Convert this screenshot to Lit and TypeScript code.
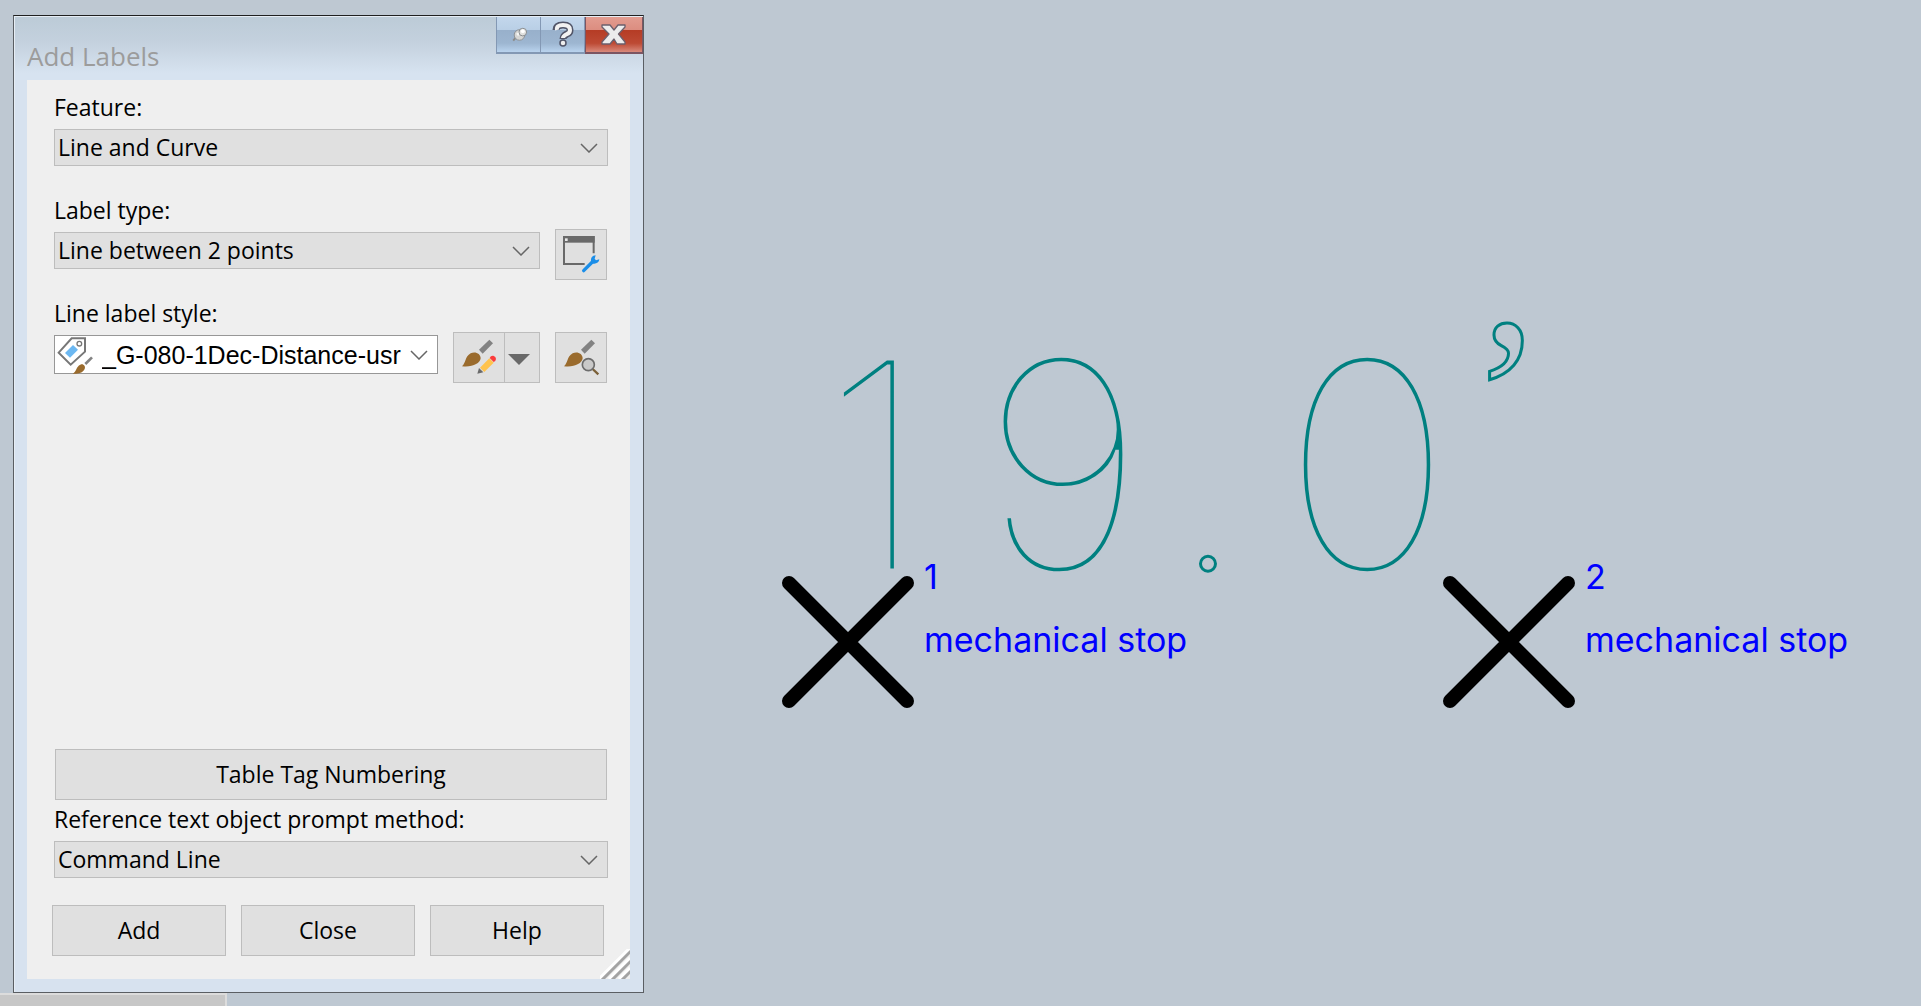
import { LitElement, html, css, svg } from "lit";
import { customElement, property } from "lit/decorators.js";

const chevron = html`<svg class="chevron" viewBox="0 0 18 10" aria-hidden="true">
  <path d="M1 1 L9 9 L17 1" fill="none" stroke="#666" stroke-width="1.5" />
</svg>`;

const brush = svg`
  <path d="M96 470 C108 460 104 442 122 431 C136 424 152 432 152 446 C150 462 126 474 96 470 Z" fill="#9a6b2d" />
  <path d="M138 424 Q154 430 157 444" fill="none" stroke="#e0e0e0" stroke-width="3" />
  <path d="M147 420 L178 390 L189 401 L158 432 Z" fill="#828282" />`;

@customElement("label-dialog")
export class LabelDialog extends LitElement {
  @property() heading = "Add Labels";
  @property() labelStyle = "_G-080-1Dec-Distance-usr";

  static styles = css`
    :host {
      display: flex;
      flex-direction: column;
      box-sizing: border-box;
      border: 1px solid #5a5e63;
      border-top-color: #202020;
      background: #d7e2ef;
      box-shadow: inset 1px 1px 0 #e6edf4;
      font: 23px/30px "Open Sans", "Noto Sans", sans-serif;
      color: #000;
    }
    .titlebar {
      display: flex;
      justify-content: space-between;
      height: 63px;
      margin: 1px 0 0 1px;
      background: linear-gradient(#bccbd7, #c4d1de 40%, #d7e3f0 90%);
    }
    .title {
      margin: 0;
      padding: 24px 0 0 12px;
      font: inherit;
      font-size: 26px;
      color: #9c9c9c;
    }
    .caption {
      display: flex;
      align-items: flex-start;
    }
    .cap {
      box-sizing: border-box;
      width: 44px;
      height: 37px;
      padding: 0;
      border: 1px solid #8398b4;
      border-width: 0 1px 2px 0;
      background: linear-gradient(#c3d7ec, #b9cfe6 37%, #98b0cb 38%, #9db6d1 75%, #b9d3ee);
    }
    .cap:first-child {
      width: 45px;
      border-left-width: 1px;
    }
    .cap.close {
      width: 58px;
      border-color: #7b5562;
      border-left: 1px solid #7b5562;
      background: linear-gradient(#e29c90, #dc8d80 37%, #b53c25 38%, #bd4a34 75%, #d98a7c);
    }
    .cap svg {
      display: block;
      width: 100%;
      height: 100%;
    }
    .client {
      position: relative;
      flex: 1;
      display: flex;
      flex-direction: column;
      margin: 0 13px 13px;
      padding: 12px 22px 23px 25px;
      background: #efefef;
    }
    .fields {
      display: flex;
      flex-direction: column;
      gap: 18px;
      padding-left: 2px;
    }
    .fields.lower {
      margin-top: auto;
    }
    .field {
      display: flex;
      flex-direction: column;
      gap: 4px;
    }
    .row {
      display: flex;
      align-items: flex-start;
      min-height: 51px;
      gap: 15px;
      padding-right: 1px;
    }
    .row.full {
      padding-right: 0;
    }
    .combo {
      flex: 1;
      display: grid;
      align-items: center;
      margin-top: 3px;
    }
    .combo > * {
      grid-area: 1 / 1;
    }
    select {
      appearance: none;
      box-sizing: border-box;
      width: 100%;
      min-width: 0;
      height: 37px;
      margin: 0;
      padding: 0 28px 1px 3px;
      border: 1px solid #bdbdbd;
      border-radius: 0;
      background: #e0e0e0;
      font: inherit;
      color: inherit;
    }
    .tagged select {
      height: 39px;
      padding: 0 28px 0 47px;
      border-color: #979797;
      background: #fff;
      font: 25px/30px "Liberation Sans", Arial, sans-serif;
    }
    .tag {
      width: 38px;
      height: 38px;
      margin-left: 2px;
      pointer-events: none;
    }
    .chevron {
      justify-self: end;
      width: 18px;
      height: 10px;
      margin-right: 10px;
      pointer-events: none;
    }
    .push {
      box-sizing: border-box;
      height: 51px;
      margin: 0;
      padding: 0 0 2px;
      border: 1px solid #bdbdbd;
      border-radius: 0;
      background: #e0e0e0;
      font: inherit;
      color: inherit;
    }
    .tool {
      width: 52px;
      padding: 0;
    }
    .push svg {
      display: block;
      width: 100%;
      height: 100%;
    }
    .split {
      display: flex;
    }
    .split .drop {
      width: 35px;
      padding: 0;
      border-left: 0;
    }
    .numbering {
      gap: 0;
    }
    .numbering .push {
      margin: 0 1px;
    }
    .numbering label {
      margin-top: 4px;
    }
    .numbering .combo {
      flex: none;
      margin-top: 7px;
    }
    .actions {
      display: flex;
      gap: 15px;
      padding: 27px 4px 0 0;
    }
    .actions .push {
      flex: 1;
    }
    .grip {
      position: absolute;
      right: 0;
      bottom: 0;
      width: 30px;
      height: 30px;
    }
  `;

  private select(id: string, value: string) {
    return html`<span class="combo">
      <select id=${id}><option>${value}</option></select>${chevron}
    </span>`;
  }

  render() {
    return html`
      <header class="titlebar">
        <h1 class="title">${this.heading}</h1>
        <div class="caption">
          <button class="cap" aria-label="Pin">
            <svg viewBox="0 0 45 35" aria-hidden="true">
              <path d="M17 24 L21 19" stroke="#8a8a88" stroke-width="2" />
              <ellipse cx="23.500" cy="18" rx="5.500" ry="5.500" fill="#d6d6d4" stroke="#8b8f93" />
              <path d="M21 18 L25 15" stroke="#f6f6f4" stroke-width="3" />
              <circle cx="27" cy="15" r="4" fill="#e0e0de" stroke="#85898d" />
              <circle cx="27" cy="14" r="2" fill="#fff" />
            </svg>
          </button>
          <button class="cap" aria-label="Help">
            <svg viewBox="0 0 43 35" aria-hidden="true">
              <g fill="none" stroke-linejoin="round">
                <path d="M15 13 Q15 8 22 8 Q29 8 29 13 Q29 16 26 17 Q22 19 22 22" stroke="#515568" stroke-width="7" />
                <circle cx="22" cy="26" r="3" fill="#eee" stroke="#515568" stroke-width="1.500" />
                <path d="M16 13 Q15 8 22 8 Q29 8 29 13 Q29 16 26 17 Q22 19 22 21" stroke="#f2f2f2" stroke-width="4" />
              </g>
            </svg>
          </button>
          <button class="cap close" aria-label="Close">
            <svg viewBox="0 0 56 35" aria-hidden="true">
              <path d="M16 8 H24 L28 13 L32 8 H39 V10 L32.500 17 L39 25 V27 H31 L28 22 L24 27 H16 V25 L23 17 L16 10 Z" fill="#ececec" stroke="#6b5f6c" stroke-width="1.300" stroke-linejoin="round" />
            </svg>
          </button>
        </div>
      </header>
      <section class="client">
        <div class="fields">
          <div class="field">
            <label for="feature">Feature:</label>
            <div class="row full">${this.select("feature", "Line and Curve")}</div>
          </div>
          <div class="field">
            <label for="type">Label type:</label>
            <div class="row">
              ${this.select("type", "Line between 2 points")}
              <button class="push tool" aria-label="Label settings">
                <svg viewBox="378 60 150 147" aria-hidden="true">
                  <path d="M464 162 H402 V81 H491 V130" fill="none" stroke="#696969" stroke-width="6" />
                  <rect x="399" y="78" width="95" height="20" fill="#696969" />
                  <rect x="405" y="85" width="8" height="8" fill="#e8e8e8" />
                  <path d="M461 182 L487 156" stroke="#1b8ee8" stroke-width="10" stroke-linecap="round" />
                  <path d="M497 136 C487 136 480 146 484 156 L490 161 C499 162 507 158 508 148 L498 151 L494 146 Z" fill="#1b8ee8" />
                </svg>
              </button>
            </div>
          </div>
          <div class="field">
            <label for="style">Line label style:</label>
            <div class="row">
              <span class="combo tagged">
                <select id="style"><option>${this.labelStyle}</option></select>
                <svg class="tag" viewBox="0 0 114 114" aria-hidden="true">
                  <path d="M47 7 H87 V47 L44 86 L8 50 Z" fill="#fff" stroke="#777" stroke-width="6" />
                  <path d="M27 51 L51 27 L66 41 L42 65 Z" fill="#6cb8f2" />
                  <circle cx="70" cy="23" r="7" fill="#fff" stroke="#777" stroke-width="4" />
                  <path d="M86 84 L108 62" stroke="#fff" stroke-width="16" />
                  <path d="M88 84 L108 64" stroke="#828282" stroke-width="8" />
                  <path d="M50 113 C62 106 60 92 73 86 C82 82 90 91 86 99 C80 112 64 114 50 113 Z" fill="#9a6b2d" />
                </svg>
                ${chevron}
              </span>
              <span class="split">
                <button class="push tool" aria-label="Edit style">
                  <svg viewBox="72 370 150 147" aria-hidden="true">
                    ${brush}
                    <path d="M150 474 L178 446 L191 459 L163 487 Z" fill="#ffc34d" />
                    <path d="M179 445 Q182 437 190 438 Q198 440 198 448 Q197 455 191 457 Z" fill="#fb3b3b" />
                    <path d="M142 492 L147 475 L160 488 Z" fill="#6a6a6a" />
                  </svg>
                </button>
                <button class="push drop" aria-label="More style actions">
                  <svg viewBox="0 0 34 49" aria-hidden="true">
                    <path d="M3 21 H25 L14 32 Z" fill="#696969" />
                  </svg>
                </button>
              </span>
              <button class="push tool" aria-label="Inspect style">
                <svg viewBox="72 370 150 147" aria-hidden="true">
                  ${brush}
                  <path d="M182 478 L199 494" stroke="#7b6038" stroke-width="7" />
                  <circle cx="169" cy="465" r="18" fill="#c9c9c9" stroke="#6c6c6c" stroke-width="5" />
                </svg>
              </button>
            </div>
          </div>
        </div>
        <div class="fields lower">
          <div class="field numbering">
            <button class="push">Table Tag Numbering</button>
            <label for="prompt">Reference text object prompt method:</label>
            ${this.select("prompt", "Command Line")}
          </div>
        </div>
        <div class="actions">
          <button class="push">Add</button>
          <button class="push">Close</button>
          <button class="push">Help</button>
        </div>
        <svg class="grip" viewBox="0 0 30 30" aria-hidden="true">
          <g stroke="#fff" stroke-width="6"><path d="M0 31 L31 0 M10 31 L31 10 M20 31 L31 20" /></g>
          <g stroke="#a3a3a3" stroke-width="3"><path d="M1 32 L32 1 M11 32 L32 11 M21 32 L32 21" /></g>
        </svg>
      </section>
    `;
  }
}

interface SurveyPoint {
  x: number;
  y: number;
  id: string;
  note: string;
}

@customElement("model-space")
export class ModelSpace extends LitElement {
  @property({ attribute: false }) points: SurveyPoint[] = [
    { x: 848, y: 642, id: "1", note: "mechanical stop" },
    { x: 1509, y: 642, id: "2", note: "mechanical stop" },
  ];

  static styles = css`
    :host {
      display: block;
    }
    .sheet {
      display: block;
      width: 100%;
      overflow: visible;
    }
    .cross {
      fill: none;
      stroke: #000;
      stroke-width: 14px;
      stroke-linecap: round;
    }
    .note {
      font: 34px Inter, sans-serif;
      fill: #0000ff;
    }
    /* The sheet-coloured outline trims each digit down to a hairline pen. */
    .distance {
      font: 100 290px Inter, sans-serif;
      text-anchor: middle;
      fill: #008080;
      stroke: #bec8d2;
      stroke-width: 3px;
    }
    .mark {
      fill: #bec8d2;
      stroke: #008080;
    }
    .foot {
      font: 220px "Liberation Serif", serif;
    }
  `;

  render() {
    return html`<svg class="sheet" viewBox="644 0 1277 1006">
      <text class="distance" y="570"><tspan x="875">1</tspan><tspan x="1063">9</tspan><tspan class="mark" x="1208">.</tspan><tspan x="1367">0</tspan><tspan class="mark foot" x="1507" y="470">’</tspan></text>
      ${this.points.map(
        (p) => svg`
          <path class="cross" d="M${p.x - 59} ${p.y - 59} l118 118 m0 -118 l-118 118" />
          <text class="note" x=${p.x + 76} y=${p.y - 53}>${p.id}</text>
          <text class="note" x=${p.x + 76} y=${p.y + 10}>${p.note}</text>`,
      )}
    </svg>`;
  }
}

@customElement("app-root")
export class AppRoot extends LitElement {
  static styles = css`
    :host {
      display: block;
      background: #bec8d2;
    }
    .workspace {
      display: grid;
      grid-template-columns: 644px 1fr;
      min-height: 100vh;
      overflow: hidden;
    }
    .side {
      display: flex;
      flex-direction: column;
      padding-top: 15px;
    }
    .dialog {
      flex: 1;
      margin-left: 13px;
    }
    .tab {
      box-sizing: border-box;
      width: 227px;
      height: 13px;
      border: 2px solid #dcdcdc;
      border-width: 2px 2px 0 0;
      background: #c7c7c7;
    }
  `;

  render() {
    return html`<main class="workspace">
      <div class="side">
        <label-dialog class="dialog"></label-dialog>
        <div class="tab"></div>
      </div>
      <model-space></model-space>
    </main>`;
  }
}
